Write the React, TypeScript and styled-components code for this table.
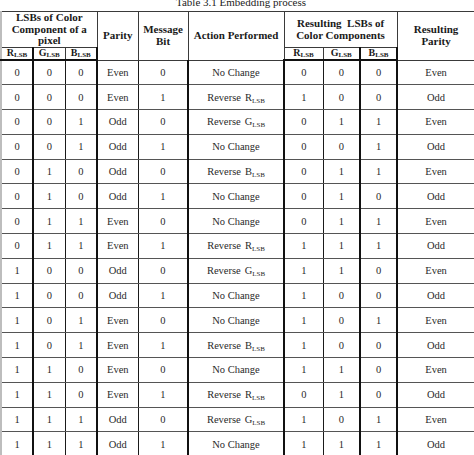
import styled, { createGlobalStyle } from "styled-components";

type Row = {
  r: number;
  g: number;
  b: number;
  parity: string;
  bit: number;
  action: "none" | "R" | "G" | "B";
  rr: number;
  rg: number;
  rb: number;
  result: string;
};

const rows: Row[] = [
  { r: 0, g: 0, b: 0, parity: "Even", bit: 0, action: "none", rr: 0, rg: 0, rb: 0, result: "Even" },
  { r: 0, g: 0, b: 0, parity: "Even", bit: 1, action: "R", rr: 1, rg: 0, rb: 0, result: "Odd" },
  { r: 0, g: 0, b: 1, parity: "Odd", bit: 0, action: "G", rr: 0, rg: 1, rb: 1, result: "Even" },
  { r: 0, g: 0, b: 1, parity: "Odd", bit: 1, action: "none", rr: 0, rg: 0, rb: 1, result: "Odd" },
  { r: 0, g: 1, b: 0, parity: "Odd", bit: 0, action: "B", rr: 0, rg: 1, rb: 1, result: "Even" },
  { r: 0, g: 1, b: 0, parity: "Odd", bit: 1, action: "none", rr: 0, rg: 1, rb: 0, result: "Odd" },
  { r: 0, g: 1, b: 1, parity: "Even", bit: 0, action: "none", rr: 0, rg: 1, rb: 1, result: "Even" },
  { r: 0, g: 1, b: 1, parity: "Even", bit: 1, action: "R", rr: 1, rg: 1, rb: 1, result: "Odd" },
  { r: 1, g: 0, b: 0, parity: "Odd", bit: 0, action: "G", rr: 1, rg: 1, rb: 0, result: "Even" },
  { r: 1, g: 0, b: 0, parity: "Odd", bit: 1, action: "none", rr: 1, rg: 0, rb: 0, result: "Odd" },
  { r: 1, g: 0, b: 1, parity: "Even", bit: 0, action: "none", rr: 1, rg: 0, rb: 1, result: "Even" },
  { r: 1, g: 0, b: 1, parity: "Even", bit: 1, action: "B", rr: 1, rg: 0, rb: 0, result: "Odd" },
  { r: 1, g: 1, b: 0, parity: "Even", bit: 0, action: "none", rr: 1, rg: 1, rb: 0, result: "Even" },
  { r: 1, g: 1, b: 0, parity: "Even", bit: 1, action: "R", rr: 0, rg: 1, rb: 0, result: "Odd" },
  { r: 1, g: 1, b: 1, parity: "Odd", bit: 0, action: "G", rr: 1, rg: 0, rb: 1, result: "Even" },
  { r: 1, g: 1, b: 1, parity: "Odd", bit: 1, action: "none", rr: 1, rg: 1, rb: 1, result: "Odd" },
];

// column widths, left to right
const widths = [32, 32, 32, 41, 50, 96, 39, 37, 37, 78];

const serif = `"Liberation Serif", "Times New Roman", serif`;

const GlobalStyle = createGlobalStyle`
  html, body {
    margin: 0;
    padding: 0;
    background: #ffffff;
    overflow: hidden;
  }
  body {
    font-family: ${serif};
    color: #1e1e1e;
  }
`;

const Page = styled.div`
  width: 474px;
  height: 455px;
  overflow: hidden;
`;

const Caption = styled.div`
  height: 11px;
  margin-top: -3px;
  line-height: 11px;
  font-family: ${serif};
  font-size: 11px;
  text-align: center;
  padding-left: 8px;
  color: #222;
`;

const Table = styled.table`
  margin-top: 3px;
  width: 474px;
  table-layout: fixed;
  border-collapse: collapse;
  border-left: 2px solid #bdbdbd;
  border-right: 2px solid #bdbdbd;
  font-family: ${serif};
`;

const HeadCell = styled.th`
  font-family: ${serif};
  font-weight: bold;
  font-size: 11px;
  line-height: 11.5px;
  text-align: center;
  vertical-align: middle;
  padding: 0;
  border: 1px solid #3a3a3a;
  white-space: nowrap;
  color: #1a1a1a;
`;

const SubHead = styled.th<{ $right?: boolean }>`
  height: 10px;
  padding: 0 0 1px;
  font-family: ${serif};
  font-size: 10px;
  line-height: 9px;
  font-weight: bold;
  text-align: center;
  vertical-align: top;
  border: 1px solid #3a3a3a;
  border-right: ${(p) => (p.$right ? "2px solid #111" : "1px solid #3a3a3a")};
  border-bottom: 2px solid #111;
  white-space: nowrap;
  color: #1a1a1a;
`;

const HeadRow = styled.tr`
  height: 36px;
`;

const SubRow = styled.tr`
  height: 10px;
`;

const DataRow = styled.tr`
  height: 24.8px;
`;

const Cell = styled.td<{ $heavy?: boolean }>`
  padding: 0;
  font-family: ${serif};
  font-size: 10.5px;
  line-height: 13px;
  text-align: center;
  vertical-align: middle;
  border-top: 1px solid #555;
  border-bottom: 1px solid #555;
  border-left: 1px solid #1a1a1a;
  border-right: ${(p) => (p.$heavy ? "2px solid #111" : "1px solid #1a1a1a")};
  white-space: nowrap;
  color: #2a2a2a;
`;

const Sub = styled.span<{ $drop?: number }>`
  font-size: 7px;
  position: relative;
  top: ${(p) => p.$drop ?? 2}px;
  line-height: 0;
`;

const ActionName = styled.span`
  margin-right: 4px;
`;

function Lsb({ c, drop }: { c: string; drop?: number }) {
  return (
    <>
      {c}
      <Sub $drop={drop}>LSB</Sub>
    </>
  );
}

function Action({ a }: { a: Row["action"] }) {
  if (a === "none") return <>No Change</>;
  return (
    <>
      <ActionName>Reverse</ActionName>
      <Lsb c={a} />
    </>
  );
}

export default function App() {
  return (
    <Page>
      <GlobalStyle />
      <Caption>Table 3.1 Embedding process</Caption>
      <Table>
        <colgroup>
          {widths.map((w, i) => (
            <col key={i} style={{ width: w }} />
          ))}
        </colgroup>
        <thead>
          <HeadRow>
            <HeadCell colSpan={3}>
              LSBs of Color
              <br />
              Component of a
              <br />
              pixel
            </HeadCell>
            <HeadCell rowSpan={2}>Parity</HeadCell>
            <HeadCell rowSpan={2}>
              Message
              <br />
              Bit
            </HeadCell>
            <HeadCell rowSpan={2}>Action Performed</HeadCell>
            <HeadCell colSpan={3}>
              Resulting&nbsp; LSBs of
              <br />
              Color Components
            </HeadCell>
            <HeadCell rowSpan={2}>
              Resulting
              <br />
              Parity
            </HeadCell>
          </HeadRow>
          <SubRow>
            <SubHead $right>
              <Lsb c="R" drop={1} />
            </SubHead>
            <SubHead>
              <Lsb c="G" drop={1} />
            </SubHead>
            <SubHead $right>
              <Lsb c="B" drop={1} />
            </SubHead>
            <SubHead>
              <Lsb c="R" drop={1} />
            </SubHead>
            <SubHead $right>
              <Lsb c="G" drop={1} />
            </SubHead>
            <SubHead $right>
              <Lsb c="B" drop={1} />
            </SubHead>
          </SubRow>
        </thead>
        <tbody>
          {rows.map((row, i) => (
            <DataRow key={i}>
              <Cell $heavy>{row.r}</Cell>
              <Cell>{row.g}</Cell>
              <Cell $heavy>{row.b}</Cell>
              <Cell>{row.parity}</Cell>
              <Cell $heavy>{row.bit}</Cell>
              <Cell $heavy>
                <Action a={row.action} />
              </Cell>
              <Cell>{row.rr}</Cell>
              <Cell $heavy>{row.rg}</Cell>
              <Cell $heavy>{row.rb}</Cell>
              <Cell>{row.result}</Cell>
            </DataRow>
          ))}
        </tbody>
      </Table>
    </Page>
  );
}
